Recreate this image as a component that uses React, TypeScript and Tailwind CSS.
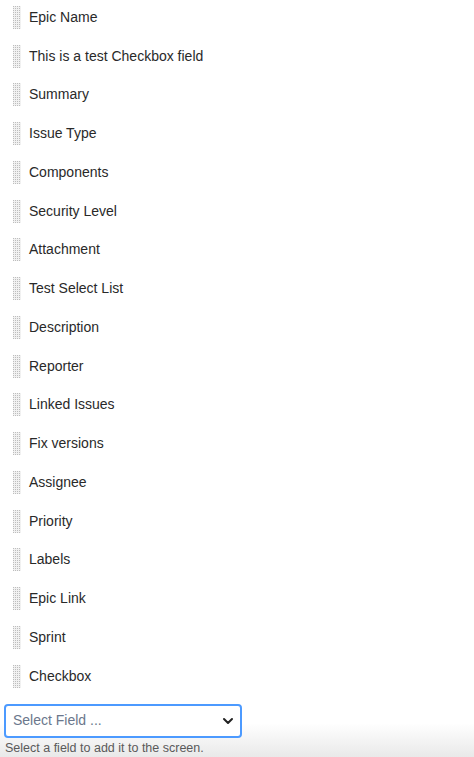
import { ChevronDown } from "lucide-react";

const fields = [
  "Epic Name",
  "This is a test Checkbox field",
  "Summary",
  "Issue Type",
  "Components",
  "Security Level",
  "Attachment",
  "Test Select List",
  "Description",
  "Reporter",
  "Linked Issues",
  "Fix versions",
  "Assignee",
  "Priority",
  "Labels",
  "Epic Link",
  "Sprint",
  "Checkbox",
];

function DragHandle() {
  return (
    <svg width="8" height="23" viewBox="0 0 8 23" className="shrink-0">
      <defs>
        <pattern id="dots" width="2" height="2" patternUnits="userSpaceOnUse">
          <rect width="2" height="2" fill="#f1f1f1" />
          <rect width="1" height="1" fill="#bdbdbd" />
        </pattern>
      </defs>
      <rect width="8" height="23" fill="url(#dots)" />
    </svg>
  );
}

export default function App() {
  return (
    <div className="relative h-[757px] w-[474px] overflow-hidden bg-white font-['Liberation_Sans','Inter',sans-serif]">
      {/* Field list */}
      <ul className="-mt-[2px]">
        {fields.map((name) => (
          <li key={name} className="flex h-[38.75px] items-center gap-2 pl-[13px]">
            <DragHandle />
            <span className="text-[14px] text-[#292929]">{name}</span>
          </li>
        ))}
      </ul>

      {/* Add field */}
      <div className="relative z-10 mt-[8px] px-1">
        <div className="flex h-[34px] w-[238px] items-center justify-between rounded-[4px] border-2 border-[#4c9aff] bg-white pl-[7px] pr-[4px]">
          <span className="text-[14px] text-[#6b778c]">Select Field ...</span>
          <ChevronDown className="h-4 w-4 text-[#222]" strokeWidth={3} />
        </div>
        <p className="mt-[1px] pl-px text-[12.5px] text-[#5a5a5a]">
          Select a field to add it to the screen.
        </p>
      </div>

      {/* bottom fade */}
      <div className="pointer-events-none absolute inset-x-0 bottom-0 h-[34px] bg-gradient-to-b from-white to-[#e9e9e9]" />
    </div>
  );
}
